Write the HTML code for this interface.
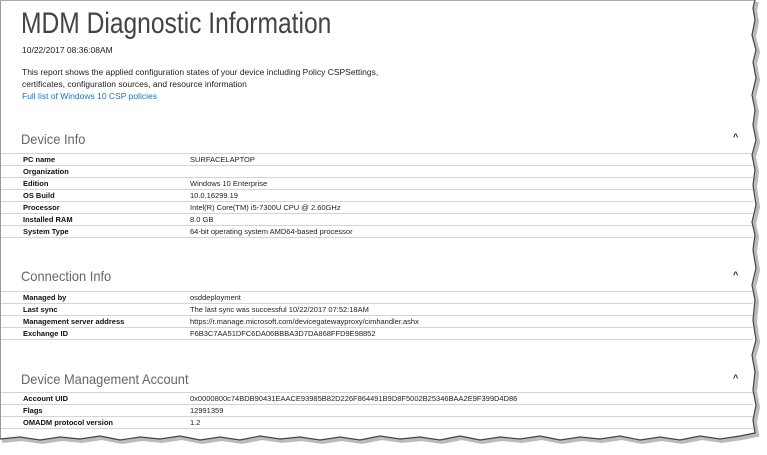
<!DOCTYPE html>
<html><head><meta charset="utf-8"><style>
body{margin:0;width:767px;height:455px;background:#fff;position:relative;overflow:hidden;font-family:"Liberation Sans",sans-serif;color:#222}
.a{position:absolute;white-space:nowrap}
h1{position:absolute;left:21px;top:7px;margin:0;font-weight:normal;font-size:30px;color:#444;transform:scaleX(0.82);transform-origin:0 0;white-space:nowrap}
.h2{position:absolute;left:21px;font-size:14px;color:#666;font-weight:normal;transform:scaleX(0.92);transform-origin:0 0;white-space:nowrap}
.car{position:absolute;left:733px;font-size:9px;font-weight:bold;color:#222}
.line{position:absolute;left:1px;width:752px;height:1px;background:#d4d4d4}
.lab{position:absolute;left:23px;font-size:7.5px;font-weight:bold;color:#111}
.val{position:absolute;left:190px;font-size:7.5px;color:#222}
.p{font-size:8.5px;color:#222}
</style></head><body>
<div style="position:absolute;left:0;top:0;width:1px;height:440px;background:#999"></div>
<div style="position:absolute;left:0;top:0;width:755px;height:1px;background:#aaa"></div>
<h1>MDM Diagnostic Information</h1>
<div class="a p" style="left:22px;top:45px">10/22/2017 08:36:08AM</div>
<div class="a p" style="left:22px;top:67px">This report shows the applied configuration states of your device including Policy CSPSettings,</div>
<div class="a p" style="left:22px;top:79px">certificates, configuration sources, and resource information</div>
<div class="a p" style="left:22px;top:91px;color:#1a73c8">Full list of Windows 10 CSP policies</div>

<div class="h2" style="top:131px">Device Info</div><div class="car" style="top:132px">^</div>
<div class="line" style="top:153px"></div><div class="line" style="top:165px"></div><div class="line" style="top:177px"></div><div class="line" style="top:189px"></div><div class="line" style="top:201px"></div><div class="line" style="top:213px"></div><div class="line" style="top:225px"></div><div class="line" style="top:237px"></div>
<div class="lab" style="top:155px">PC name</div><div class="val" style="top:155px">SURFACELAPTOP</div>
<div class="lab" style="top:167px">Organization</div>
<div class="lab" style="top:179px">Edition</div><div class="val" style="top:179px">Windows 10 Enterprise</div>
<div class="lab" style="top:191px">OS Build</div><div class="val" style="top:191px">10.0.16299.19</div>
<div class="lab" style="top:203px">Processor</div><div class="val" style="top:203px">Intel(R) Core(TM) i5-7300U CPU @ 2.60GHz</div>
<div class="lab" style="top:215px">Installed RAM</div><div class="val" style="top:215px">8.0 GB</div>
<div class="lab" style="top:227px">System Type</div><div class="val" style="top:227px">64-bit operating system AMD64-based processor</div>

<div class="h2" style="top:268px">Connection Info</div><div class="car" style="top:270px">^</div>
<div class="line" style="top:291px"></div><div class="line" style="top:303px"></div><div class="line" style="top:315px"></div><div class="line" style="top:327px"></div><div class="line" style="top:339px"></div>
<div class="lab" style="top:293px">Managed by</div><div class="val" style="top:293px">osddeployment</div>
<div class="lab" style="top:305px">Last sync</div><div class="val" style="top:305px">The last sync was successful 10/22/2017 07:52:18AM</div>
<div class="lab" style="top:317px">Management server address</div><div class="val" style="top:317px">https://r.manage.microsoft.com/devicegatewayproxy/cimhandler.ashx</div>
<div class="lab" style="top:329px">Exchange ID</div><div class="val" style="top:329px">F6B3C7AA51DFC6DA06BBBA3D7DA868FFD9E98852</div>

<div class="h2" style="top:371px">Device Management Account</div><div class="car" style="top:373px">^</div>
<div class="line" style="top:392px"></div><div class="line" style="top:404px"></div><div class="line" style="top:416px"></div><div class="line" style="top:428px"></div>
<div class="lab" style="top:394px">Account UID</div><div class="val" style="top:394px">0x0000800c74BDB90431EAACE93985B82D226F864491B9D8F5002B25346BAA2E9F399D4D86</div>
<div class="lab" style="top:406px">Flags</div><div class="val" style="top:406px">12991359</div>
<div class="lab" style="top:418px">OMADM protocol version</div><div class="val" style="top:418px">1.2</div>

<svg style="position:absolute;left:0;top:0" width="767" height="455">
<path d="M767 0 L755 0 L753 8 L755 20 L752 35 L756 50 L753 62 L756 78 L752 95 L755 110 L753 125 L756 140 L752 155 L755 170 L753 185 L756 205 L752 222 L755 235 L753 250 L756 268 L752 285 L755 300 L753 320 L756 340 L752 355 L755 372 L753 390 L756 405 L753 420 L755 433 L740 436 L720 439 L700 436 L680 440 L660 437 L640 440 L620 436 L600 439 L580 437 L560 440 L540 436 L520 439 L500 437 L480 440 L460 436 L440 440 L420 437 L400 439 L380 436 L360 440 L340 437 L320 440 L300 437 L280 439 L260 436 L240 440 L220 437 L200 440 L180 436 L160 439 L140 437 L120 440 L100 436 L80 439 L60 437 L40 440 L20 437 L0 439 L0 455 L767 455 Z" fill="#fff"/>
<path d="M755 0 L753 8 L755 20 L752 35 L756 50 L753 62 L756 78 L752 95 L755 110 L753 125 L756 140 L752 155 L755 170 L753 185 L756 205 L752 222 L755 235 L753 250 L756 268 L752 285 L755 300 L753 320 L756 340 L752 355 L755 372 L753 390 L756 405 L753 420 L755 433 L740 436 L720 439 L700 436 L680 440 L660 437 L640 440 L620 436 L600 439 L580 437 L560 440 L540 436 L520 439 L500 437 L480 440 L460 436 L440 440 L420 437 L400 439 L380 436 L360 440 L340 437 L320 440 L300 437 L280 439 L260 436 L240 440 L220 437 L200 440 L180 436 L160 439 L140 437 L120 440 L100 436 L80 439 L60 437 L40 440 L20 437 L0 439" fill="none" stroke="#bbb" stroke-width="4" transform="translate(2,2)"/>
<path d="M755 0 L753 8 L755 20 L752 35 L756 50 L753 62 L756 78 L752 95 L755 110 L753 125 L756 140 L752 155 L755 170 L753 185 L756 205 L752 222 L755 235 L753 250 L756 268 L752 285 L755 300 L753 320 L756 340 L752 355 L755 372 L753 390 L756 405 L753 420 L755 433 L740 436 L720 439 L700 436 L680 440 L660 437 L640 440 L620 436 L600 439 L580 437 L560 440 L540 436 L520 439 L500 437 L480 440 L460 436 L440 440 L420 437 L400 439 L380 436 L360 440 L340 437 L320 440 L300 437 L280 439 L260 436 L240 440 L220 437 L200 440 L180 436 L160 439 L140 437 L120 440 L100 436 L80 439 L60 437 L40 440 L20 437 L0 439" fill="none" stroke="#444" stroke-width="1.2"/>
</svg>
</body></html>
